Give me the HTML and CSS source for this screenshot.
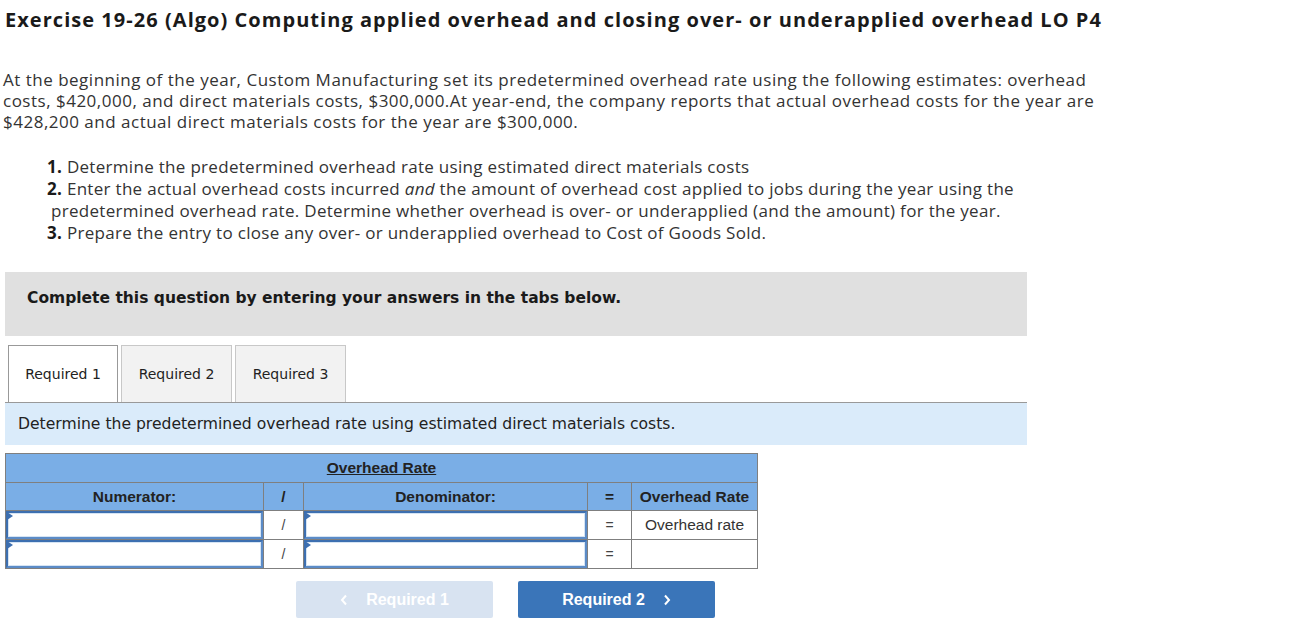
FILE: index.html
```html
<!DOCTYPE html>
<html lang="en">
<head>
    <meta charset="UTF-8">
    <meta name="viewport" content="width=device-width, initial-scale=1.0">
    <title>Exercise 19-26 (Algo)</title>
    <link rel="stylesheet" href="styles.css">
</head>
<body>
    <h1 class="title">Exercise 19-26 (Algo) Computing applied overhead and closing over- or underapplied overhead LO P4</h1>

    <p class="intro">At the beginning of the year, Custom Manufacturing set its predetermined overhead rate using the following estimates: overhead costs, $420,000, and direct materials costs, $300,000.At year-end, the company reports that actual overhead costs for the year are $428,200 and actual direct materials costs for the year are $300,000.</p>

    <ol class="steps">
        <li><b>1.</b> Determine the predetermined overhead rate using estimated direct materials costs</li>
        <li><b>2.</b> Enter the actual overhead costs incurred <i>and</i> the amount of overhead cost applied to jobs during the year using the predetermined overhead rate. Determine whether overhead is over- or underapplied (and the amount) for the year.</li>
        <li><b>3.</b> Prepare the entry to close any over- or underapplied overhead to Cost of Goods Sold.</li>
    </ol>

    <div class="notice">Complete this question by entering your answers in the tabs below.</div>

    <div class="tabs">
        <div class="tab active">Required 1</div>
        <div class="tab">Required 2</div>
        <div class="tab">Required 3</div>
    </div>

    <div class="instruction">Determine the predetermined overhead rate using estimated direct materials costs.</div>

    <table class="rate-table">
        <tr class="head caption">
            <th colspan="5"><u>Overhead Rate</u></th>
        </tr>
        <tr class="head">
            <th class="col-num">Numerator:</th>
            <th class="col-op">/</th>
            <th class="col-den">Denominator:</th>
            <th class="col-eq">=</th>
            <th class="col-res">Overhead Rate</th>
        </tr>
        <tr class="row">
            <td class="entry"><div class="field"><input type="text"></div></td>
            <td class="op">/</td>
            <td class="entry"><div class="field"><input type="text"></div></td>
            <td class="op">=</td>
            <td class="res">Overhead rate</td>
        </tr>
        <tr class="row">
            <td class="entry"><div class="field"><input type="text"></div></td>
            <td class="op">/</td>
            <td class="entry"><div class="field"><input type="text"></div></td>
            <td class="op">=</td>
            <td class="res"></td>
        </tr>
    </table>

    <div class="nav">
        <button class="nav-btn prev" disabled>
            <svg width="8" height="12" viewBox="0 0 8 12"><path d="M6 1.5 L2 6 L6 10.5" fill="none" stroke="currentColor" stroke-width="2"/></svg>
            Required 1
        </button>
        <button class="nav-btn next">
            Required 2
            <svg width="8" height="12" viewBox="0 0 8 12"><path d="M2 1.5 L6 6 L2 10.5" fill="none" stroke="currentColor" stroke-width="2"/></svg>
        </button>
    </div>
</body>
</html>
```

FILE: styles.css
```css
body {
    margin: 0;
    padding: 0 0 0 3px;
    font-family: "Open Sans", Lato, sans-serif;
    color: #222;
    background: #fff;
}
.title {
    margin: 0;
    padding: 8px 0 0 2px;
    font-size: 20px;
    line-height: 24px;
    letter-spacing: 1.04px;
    font-weight: bold;
    color: #1a1a1a;
    white-space: nowrap;
}
.intro {
    margin: 37px 0 0 0;
    max-width: 1118px;
    font-size: 17px;
    line-height: 21px;
    letter-spacing: 0.5px;
    color: #333;
}
.steps {
    list-style: none;
    margin: 24px 0 0 0;
    padding: 0 0 0 44px;
    max-width: 1026px;
    font-size: 17px;
    line-height: 22px;
    letter-spacing: 0.3px;
    color: #333;
}
.steps li {
    padding-left: 4px;
    text-indent: -4px;
}
.steps b {
    color: #1a1a1a;
}
.notice {
    margin: 28px 0 0 2px;
    width: 1022px;
    height: 64px;
    box-sizing: border-box;
    padding: 17px 0 0 22px;
    background: #e0e0e0;
    font-family: "DejaVu Sans", Verdana, sans-serif;
    font-size: 15.5px;
    font-weight: bold;
    color: #1a1a1a;
}
.tabs {
    display: flex;
    gap: 3px;
    margin: 9px 0 0 5px;
}
.tab {
    width: 111px;
    height: 57px;
    box-sizing: border-box;
    border: 1px solid #c8c8c8;
    border-bottom: none;
    background: #f2f2f2;
    display: flex;
    align-items: center;
    justify-content: center;
    font-family: "DejaVu Sans", Verdana, sans-serif;
    font-size: 14px;
    color: #222;
}
.tab.active {
    width: 110px;
    background: #fff;
    border-color: #999;
}
.instruction {
    margin: 0 0 0 2px;
    width: 1022px;
    height: 43px;
    box-sizing: border-box;
    padding: 12px 0 0 13px;
    background: #daebfa;
    border-top: 1px solid #999;
    font-family: "DejaVu Sans", Verdana, sans-serif;
    font-size: 15.6px;
    color: #222;
}
.rate-table {
    margin: 8px 0 0 2px;
    border-collapse: collapse;
    font-family: "Liberation Sans", Arial, sans-serif;
    font-size: 15.5px;
    color: #222;
}
.rate-table th, .rate-table td {
    border: 1px solid #7f7f7f;
    padding: 0;
    text-align: center;
}
.rate-table tr {
    height: 28px;
}
.rate-table tr.caption,
.rate-table tr.row {
    height: 29px;
}
.rate-table .head th {
    background: #7aaee6;
    font-weight: bold;
}
.col-num { width: 257px; }
.col-op { width: 39px; }
.col-den { width: 283px; }
.col-eq { width: 43px; }
.col-res { width: 125px; }
.rate-table td.op {
    font-size: 14px;
    color: #444;
}
.rate-table td.res {
    color: #333;
}
.field {
    position: relative;
    height: 28px;
    box-sizing: border-box;
    border: 2px solid #3d6fb0;
    border-right-color: #5b8bc7;
    border-bottom-color: #5b8bc7;
}
.field input {
    display: block;
    width: 100%;
    height: 100%;
    box-sizing: border-box;
    border: 1px solid #d5e4f4;
    outline: none;
    margin: 0;
    padding: 0 4px;
    font-size: 15px;
    background: #fff;
}
.field::before {
    content: "";
    position: absolute;
    left: -1px;
    top: -1px;
    border-left: 6px solid #3d6fb0;
    border-top: 4px solid transparent;
    border-bottom: 4px solid transparent;
}
.nav {
    display: flex;
    gap: 25px;
    margin: 12px 0 0 293px;
}
.nav-btn {
    width: 197px;
    height: 37px;
    border: none;
    border-radius: 2px;
    display: flex;
    align-items: center;
    justify-content: center;
    gap: 18px;
    font-family: "Liberation Sans", Arial, sans-serif;
    font-size: 16px;
    font-weight: bold;
    color: #fff;
    cursor: pointer;
}
.nav-btn.prev {
    background: #d8e3f1;
    cursor: not-allowed;
}
.nav-btn.next {
    background: #3a75b9;
}
```
